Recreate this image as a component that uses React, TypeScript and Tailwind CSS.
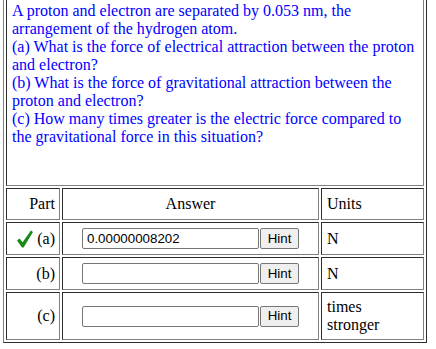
import React from "react";

const serif = "font-['Liberation_Serif',_'Times_New_Roman',_serif]";
const sans = "font-['Liberation_Sans',_Arial,_sans-serif]";
const cell = "[border:1px_inset_#808080] flex items-center";

const CheckMark = () => (
  <svg width="16" height="18" viewBox="0 0 16 18" className="shrink-0">
    <path
      d="M0 10.6 L2.6 8.4 L5.6 12.2 L13.9 0.4 L16 2 L6.6 17.6 L5 17.6 Z"
      fill="#178a17"
    />
  </svg>
);

const AnswerInput = ({ value }: { value?: string }) => (
  <div className="flex items-center justify-center w-full">
    <input
      type="text"
      defaultValue={value}
      className={`${sans} w-[177px] h-[21px] border border-[#767676] rounded-[2px] bg-white px-[4px] text-[13.33px] text-black outline-none`}
    />
    <button
      className={`${sans} ml-[1px] w-[39px] h-[21px] border border-[#767676] rounded-[2px] bg-[#efefef] text-[13.33px] text-black`}
    >
      Hint
    </button>
  </div>
);

const rows = [
  { part: "(a)", value: "0.00000008202", units: "N", correct: true, h: "h-[33px]" },
  { part: "(b)", value: "", units: "N", correct: false, h: "h-[33px]" },
  { part: "(c)", value: "", units: "times\nstronger", correct: false, h: "h-[48px]" },
];

export default function App() {
  return (
    <div className={`${serif} text-[16px] leading-[18px] text-black bg-white w-[436px] h-[349px] overflow-hidden`}>
      <div className="ml-[3px] -mt-[6px] w-[424px] p-[2px] [border:1px_outset_#808080]">
        <div className="grid grid-cols-[54px_257px_103px] gap-[2px]">
          <div className="col-span-3 h-[189px] [border:1px_inset_#808080] pt-[4px] px-[5px] text-[#0000ff] whitespace-nowrap">
            A proton and electron are separated by 0.053 nm, the
            <br />
            arrangement of the hydrogen atom.
            <br />
            (a) What is the force of electrical attraction between the proton
            <br />
            and electron?
            <br />
            (b) What is the force of gravitational attraction between the
            <br />
            proton and electron?
            <br />
            (c) How many times greater is the electric force compared to
            <br />
            the gravitational force in this situation?
          </div>

          <div className={`${cell} h-[32px] justify-end pr-[4px]`}>Part</div>
          <div className={`${cell} h-[32px] justify-center`}>Answer</div>
          <div className={`${cell} h-[32px] pl-[5px]`}>Units</div>

          {rows.map(row => (
            <React.Fragment key={row.part}>
              <div className={`${cell} ${row.h} justify-end pr-[4px]`}>
                {row.correct && <CheckMark />}
                <span className="ml-[4px]">{row.part}</span>
              </div>
              <div className={`${cell} ${row.h}`}>
                <AnswerInput value={row.value} />
              </div>
              <div className={`${cell} ${row.h} pl-[5px] whitespace-pre-line`}>
                {row.units}
              </div>
            </React.Fragment>
          ))}
        </div>
      </div>
    </div>
  );
}
